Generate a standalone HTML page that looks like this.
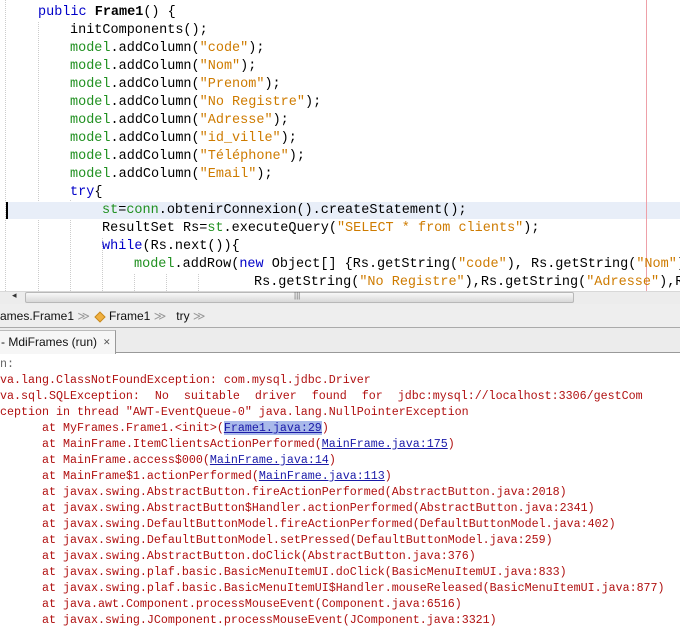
<!DOCTYPE html>
<html><head><style>
*{margin:0;padding:0;box-sizing:border-box}
body{width:680px;height:623px;overflow:hidden;background:#fff;position:relative;font-family:"Liberation Mono",monospace}
.c{position:absolute;left:0;right:0;overflow:hidden;height:18px;line-height:18px;font-size:13.5px;white-space:pre;color:#000}
.k{color:#0000c8}.g{color:#209020}.s{color:#ce7b00}.b{font-weight:bold}
.o{position:absolute;left:0;width:680px;overflow:hidden;height:16px;line-height:16px;font-size:11.67px;white-space:pre;color:#b01010}
.i{padding-left:42px}
.l{color:#1a1aa8;text-decoration:underline}
.guide{position:absolute;border-left:1px dotted #ccc}
.ui{font-family:"Liberation Sans",sans-serif;font-size:12px;position:absolute;white-space:pre;color:#111}
</style></head><body>
<div class="guide" style="left:5px;top:0;height:291px"></div>
<div class="guide" style="left:38px;top:22px;height:269px"></div>
<div class="guide" style="left:70px;top:200px;height:91px"></div>
<div class="guide" style="left:102px;top:238px;height:53px"></div>
<div class="guide" style="left:134px;top:274px;height:17px"></div>
<div class="guide" style="left:166px;top:274px;height:17px"></div>
<div class="guide" style="left:198px;top:274px;height:17px"></div>
<div style="position:absolute;left:7px;top:202px;width:673px;height:17px;background:#e8eef8"></div>
<div style="position:absolute;left:6px;top:202px;width:2px;height:17px;background:#000"></div>
<div style="position:absolute;left:646px;top:0;width:1px;height:301px;background:#eea0a8"></div>

<div class="c" style="top:4px;left:38px"><span class="k">public</span> <span class="b">Frame1</span>() {</div>
<div class="c" style="top:22px;left:70px">initComponents();</div>
<div class="c" style="top:40px;left:70px"><span class="g">model</span>.addColumn(<span class="s">"code"</span>);</div>
<div class="c" style="top:58px;left:70px"><span class="g">model</span>.addColumn(<span class="s">"Nom"</span>);</div>
<div class="c" style="top:76px;left:70px"><span class="g">model</span>.addColumn(<span class="s">"Prenom"</span>);</div>
<div class="c" style="top:94px;left:70px"><span class="g">model</span>.addColumn(<span class="s">"No Registre"</span>);</div>
<div class="c" style="top:112px;left:70px"><span class="g">model</span>.addColumn(<span class="s">"Adresse"</span>);</div>
<div class="c" style="top:130px;left:70px"><span class="g">model</span>.addColumn(<span class="s">"id_ville"</span>);</div>
<div class="c" style="top:148px;left:70px"><span class="g">model</span>.addColumn(<span class="s">"Téléphone"</span>);</div>
<div class="c" style="top:166px;left:70px"><span class="g">model</span>.addColumn(<span class="s">"Email"</span>);</div>
<div class="c" style="top:184px;left:70px"><span class="k">try</span>{</div>
<div class="c" style="top:202px;left:102px"><span class="g">st</span>=<span class="g">conn</span>.obtenirConnexion().createStatement();</div>
<div class="c" style="top:220px;left:102px">ResultSet Rs=<span class="g">st</span>.executeQuery(<span class="s">"SELECT * from clients"</span>);</div>
<div class="c" style="top:238px;left:102px"><span class="k">while</span>(Rs.next()){</div>
<div class="c" style="top:256px;left:134px"><span class="g">model</span>.addRow(<span class="k">new</span> Object[] {Rs.getString(<span class="s">"code"</span>), Rs.getString(<span class="s">"Nom"</span>),</div>
<div class="c" style="top:274px;left:254px">Rs.getString(<span class="s">"No Registre"</span>),Rs.getString(<span class="s">"Adresse"</span>),Rs</div>

<div style="position:absolute;left:0;top:291px;width:680px;height:13px;background:#ececec;border-top:1px solid #d8d8d8"></div>
<div class="ui" style="left:12px;top:290px;font-size:9px;color:#333">◂</div>
<div style="position:absolute;left:25px;top:292px;width:549px;height:11px;background:linear-gradient(#f8f8f8,#d8d8d8);border:1px solid #b8b8b8;border-radius:2px"></div>
<div class="ui" style="left:294px;top:291px;font-size:8px;color:#666">|||</div>
<div style="position:absolute;left:0;top:304px;width:680px;height:24px;background:#eeeeee;border-bottom:1px solid #aaa"></div>
<div class="ui" style="left:0;top:309px">ames.Frame1 <span style="color:#999">≫</span></div>
<div style="position:absolute;left:96px;top:313px;width:8px;height:8px;background:#f0b040;transform:rotate(45deg);border:1px solid #c88a20"></div>
<div class="ui" style="left:109px;top:309px">Frame1 <span style="color:#999">≫</span>   try <span style="color:#999">≫</span></div>
<div style="position:absolute;left:0;top:328px;width:680px;height:25px;background:#ececec;border-bottom:1px solid #999"></div>
<div style="position:absolute;left:0;top:330px;width:116px;height:24px;background:#f6f6f6;border-right:1px solid #999;border-top:1px solid #bbb"></div>
<div class="ui" style="left:1px;top:335px">- MdiFrames (run)</div>
<div class="ui" style="left:103px;top:337px;font-size:9px;color:#555">✕</div>

<div class="o" style="top:356px;color:#666">n:</div>
<div class="o" style="top:372px">va.lang.ClassNotFoundException: com.mysql.jdbc.Driver</div>
<div class="o" style="top:388px;word-spacing:8px">va.sql.SQLException: No suitable driver found for jdbc:mysql://localhost:3306/gestCom</div>
<div class="o" style="top:404px">ception in thread "AWT-EventQueue-0" java.lang.NullPointerException</div>
<div class="o i" style="top:420px">at MyFrames.Frame1.&lt;init&gt;(<span class="l" style="background:#a9b9ea">Frame1.java:29</span>)</div>
<div class="o i" style="top:436px">at MainFrame.ItemClientsActionPerformed(<span class="l">MainFrame.java:175</span>)</div>
<div class="o i" style="top:452px">at MainFrame.access$000(<span class="l">MainFrame.java:14</span>)</div>
<div class="o i" style="top:468px">at MainFrame$1.actionPerformed(<span class="l">MainFrame.java:113</span>)</div>
<div class="o i" style="top:484px">at javax.swing.AbstractButton.fireActionPerformed(AbstractButton.java:2018)</div>
<div class="o i" style="top:500px">at javax.swing.AbstractButton$Handler.actionPerformed(AbstractButton.java:2341)</div>
<div class="o i" style="top:516px">at javax.swing.DefaultButtonModel.fireActionPerformed(DefaultButtonModel.java:402)</div>
<div class="o i" style="top:532px">at javax.swing.DefaultButtonModel.setPressed(DefaultButtonModel.java:259)</div>
<div class="o i" style="top:548px">at javax.swing.AbstractButton.doClick(AbstractButton.java:376)</div>
<div class="o i" style="top:564px">at javax.swing.plaf.basic.BasicMenuItemUI.doClick(BasicMenuItemUI.java:833)</div>
<div class="o i" style="top:580px">at javax.swing.plaf.basic.BasicMenuItemUI$Handler.mouseReleased(BasicMenuItemUI.java:877)</div>
<div class="o i" style="top:596px">at java.awt.Component.processMouseEvent(Component.java:6516)</div>
<div class="o i" style="top:612px">at javax.swing.JComponent.processMouseEvent(JComponent.java:3321)</div>
</body></html>
